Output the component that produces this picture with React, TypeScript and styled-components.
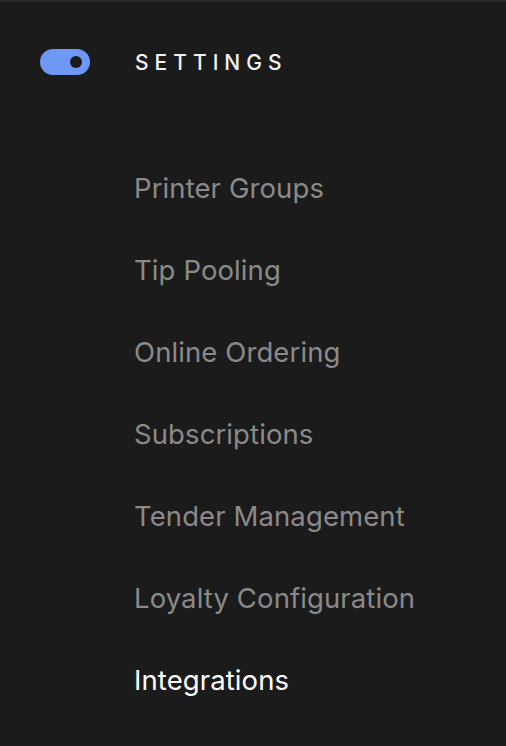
import styled, { createGlobalStyle } from 'styled-components';

const GlobalStyle = createGlobalStyle`
	html, body {
		margin: 0;
		padding: 0;
		background: #1b1b1b;
	}
	body {
		font-family: Inter, "Noto Sans", "Liberation Sans", sans-serif;
		-webkit-font-smoothing: antialiased;
	}
`;

const items = [
	{ label: 'Printer Groups', active: false },
	{ label: 'Tip Pooling', active: false },
	{ label: 'Online Ordering', active: false },
	{ label: 'Subscriptions', active: false },
	{ label: 'Tender Management', active: false },
	{ label: 'Loyalty Configuration', active: false },
	{ label: 'Integrations', active: true },
];

export default function App() {
	return (
		<>
			<GlobalStyle />
			<Panel>
				<Header>
					<Toggle>
						<Knob />
					</Toggle>
					<Title>Settings</Title>
				</Header>
				<Menu>
					{items.map(item => (
						<MenuItem key={item.label} $active={item.active}>
							{item.label}
						</MenuItem>
					))}
				</Menu>
			</Panel>
		</>
	);
}

const Panel = styled.div`
	width: 506px;
	height: 746px;
	box-sizing: border-box;
	background: #1b1b1b;
	border-top: 2px solid #2a2a2a;
	overflow: hidden;
`;

const Header = styled.div`
	display: flex;
	align-items: center;
	gap: 45px;
	padding: 46px 0 0 40px;
	height: 28px;
`;

const Toggle = styled.div`
	width: 50px;
	height: 26px;
	border-radius: 13px;
	background: #6f97f5;
	display: flex;
	align-items: center;
	justify-content: flex-end;
	padding-right: 8px;
	box-sizing: border-box;
`;

const Knob = styled.div`
	width: 12px;
	height: 12px;
	border-radius: 50%;
	background: #1b1b1b;
`;

const Title = styled.h1`
	margin: 0;
	font-size: 21px;
	font-weight: 500;
	letter-spacing: 6px;
	text-transform: uppercase;
	color: #f2f2f2;
`;

const Menu = styled.nav`
	display: flex;
	flex-direction: column;
	gap: 48px;
	padding: 95px 0 0 134px;
`;

const MenuItem = styled.a<{ $active: boolean }>`
	font-size: 27.5px;
	line-height: 34px;
	font-weight: 400;
	letter-spacing: 0.1px;
	color: ${({ $active }) => ($active ? '#ffffff' : '#8a8a8a')};
	cursor: pointer;
`;
